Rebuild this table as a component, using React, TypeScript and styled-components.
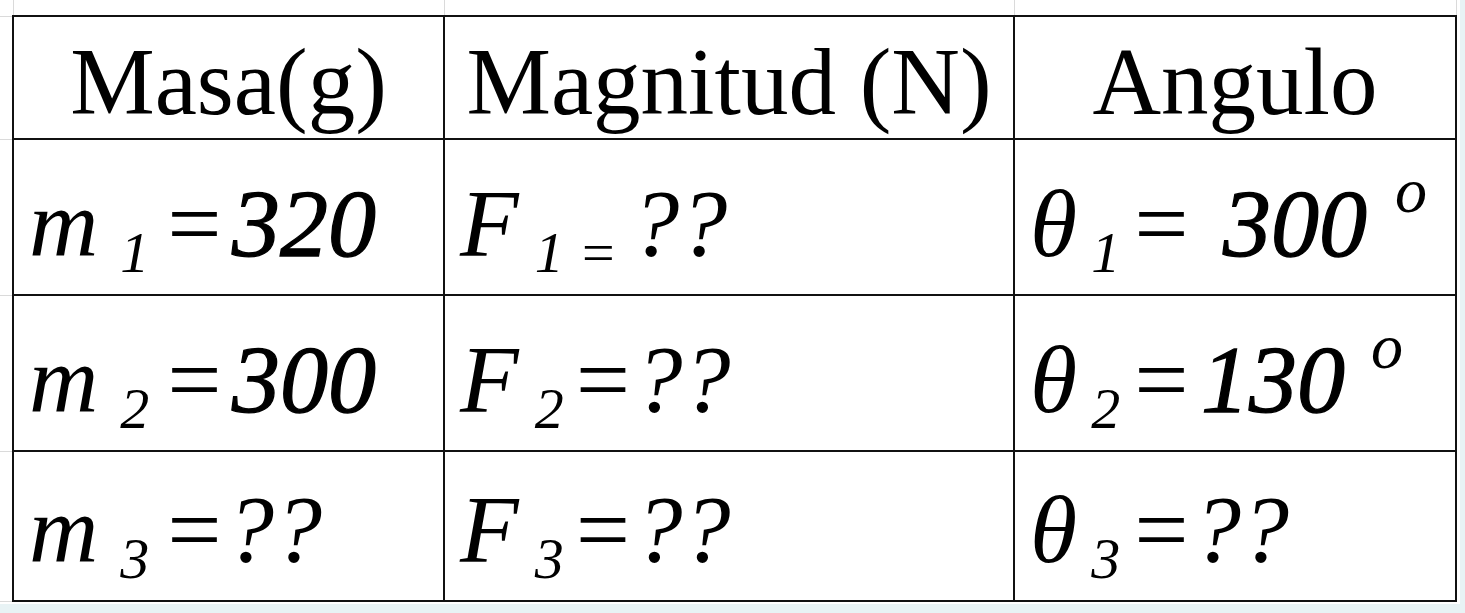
import React from 'react';
import styled, { createGlobalStyle } from 'styled-components';

const GlobalStyle = createGlobalStyle`
  html, body {
    margin: 0;
    padding: 0;
    background: #e8f3f5;
  }
`;

const Sheet = styled.div`
  width: 1460px;
  height: 604px;
  background: #fff;
  overflow: hidden;
`;

const Grid = styled.table`
  border-collapse: collapse;
  table-layout: fixed;
  width: 1456px;
  font-family: "Liberation Serif", "Times New Roman", serif;
  color: #000;
`;

const GhostCell = styled.td`
  padding: 0;
  border: 1px solid #dadada;
  border-top: none;
  border-left: none;
`;

const Row = styled.tr<{ $h: number }>`
  height: ${(p) => p.$h}px;
`;

const Head = styled.th`
  font-weight: 400;
  font-size: 95px;
  line-height: 96px;
  text-align: center;
  vertical-align: bottom;
  padding: 0 0 8px;
  border: 2px solid #111;
  white-space: nowrap;
`;

const Cell = styled.td`
  font-style: italic;
  font-size: 96px;
  line-height: 96px;
  text-align: left;
  vertical-align: bottom;
  padding: 0 0 22px 15px;
  border: 2px solid #111;
  white-space: nowrap;
`;

const Sub = styled.span<{ $gap?: number }>`
  font-size: 58px;
  line-height: 0;
  vertical-align: -16px;
  margin-left: ${(p) => p.$gap ?? 22}px;
`;

const Eq = styled.span<{ $gap?: number }>`
  margin-left: ${(p) => p.$gap ?? 0}px;
`;

const Num = styled.span<{ $gap?: number }>`
  -webkit-text-stroke: 1.3px #000;
  margin-left: ${(p) => p.$gap ?? 0}px;
`;

const Deg = styled.span<{ $gap?: number }>`
  font-size: 64px;
  line-height: 0;
  vertical-align: 44px;
  margin-left: ${(p) => p.$gap ?? 10}px;
`;

export default function App() {
  return (
    <>
      <GlobalStyle />
      <Sheet>
        <Grid>
          <colgroup>
            <col style={{ width: 13 }} />
            <col style={{ width: 431 }} />
            <col style={{ width: 570 }} />
            <col style={{ width: 442 }} />
          </colgroup>
          <tbody>
            <Row $h={16}>
              <GhostCell />
              <GhostCell />
              <GhostCell />
              <GhostCell />
            </Row>
            <Row $h={123}>
              <GhostCell />
              <Head>Masa(g)</Head>
              <Head>Magnitud (N)</Head>
              <Head>Angulo</Head>
            </Row>
            <Row $h={156}>
              <GhostCell />
              <Cell>
                m<Sub>1</Sub>
                <Eq $gap={12}>=</Eq>
                <Num $gap={6}>320</Num>
              </Cell>
              <Cell>
                F<Sub $gap={16}>1 =</Sub>
                <Eq $gap={14}>??</Eq>
              </Cell>
              <Cell>
                θ<Sub $gap={14}>1</Sub>
                <Eq $gap={8}>=</Eq>
                <Num $gap={30}>300</Num>
                <Deg $gap={28}>o</Deg>
              </Cell>
            </Row>
            <Row $h={156}>
              <GhostCell />
              <Cell>
                m<Sub>2</Sub>
                <Eq $gap={12}>=</Eq>
                <Num $gap={6}>300</Num>
              </Cell>
              <Cell>
                F<Sub $gap={16}>2</Sub>
                <Eq $gap={6}>=??</Eq>
              </Cell>
              <Cell>
                θ<Sub $gap={14}>2</Sub>
                <Eq $gap={8}>=</Eq>
                <Num $gap={8}>130</Num>
                <Deg $gap={26}>o</Deg>
              </Cell>
            </Row>
            <Row $h={150}>
              <GhostCell />
              <Cell>
                m<Sub>3</Sub>
                <Eq $gap={12}>=??</Eq>
              </Cell>
              <Cell>
                F<Sub $gap={16}>3</Sub>
                <Eq $gap={6}>=??</Eq>
              </Cell>
              <Cell>
                θ<Sub $gap={14}>3</Sub>
                <Eq $gap={8}>=??</Eq>
              </Cell>
            </Row>
          </tbody>
        </Grid>
      </Sheet>
    </>
  );
}
